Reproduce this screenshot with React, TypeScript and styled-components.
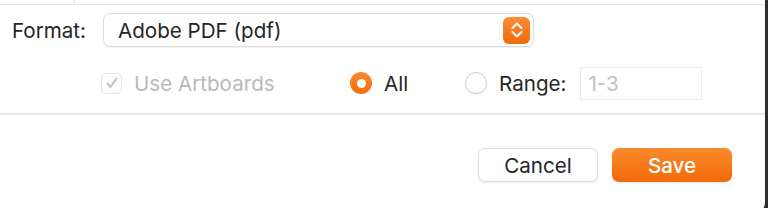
import React, { useState } from "react";
import styled, { createGlobalStyle } from "styled-components";

// styled-components
//--------------------------
const GlobalStyle = createGlobalStyle`
  html, body {
    margin: 0;
    padding: 0;
    background: #2d2d2d;
  }
  body {
    font-family: Inter, "Liberation Sans", Arial, sans-serif;
    -webkit-font-smoothing: antialiased;
  }
`;

const Frame = styled.div`
  width: 768px;
  height: 208px;
  overflow: hidden;
  background: #2d2d2d;
`;

const Panel = styled.div`
  width: 765px;
  height: 216px;
  background: #ffffff;
  border-bottom-right-radius: 14px;
  display: flex;
  flex-direction: column;
`;

const TopStrip = styled.div`
  height: 4px;
  border-bottom: 1px solid #e2e2e2;
  display: flex;
`;

const TopCell = styled.div`
  width: 74px;
  border-right: 1px solid #e2e2e2;
`;

const FormatRow = styled.div`
  display: flex;
  align-items: center;
  padding-left: 12px;
  margin-top: 8px;
  height: 34px;
`;

const Label = styled.span<{ $dim?: boolean }>`
  font-size: 20.6px;
  color: ${(p) => (p.$dim ? "#b9b9b9" : "#262626")};
  white-space: nowrap;
`;

const FormatLabel = styled(Label)`
  width: 91px;
  flex-shrink: 0;
`;

const SelectBox = styled.div`
  width: 431px;
  height: 34px;
  box-sizing: border-box;
  border: 1px solid #dcdcdc;
  border-radius: 7px;
  box-shadow: 0 1px 1px rgba(0, 0, 0, 0.06);
  display: flex;
  align-items: center;
  justify-content: space-between;
  padding: 0 3px 0 14px;
`;

const Stepper = styled.div`
  width: 27px;
  height: 27px;
  border-radius: 6px;
  background: linear-gradient(#fb8c32, #f26a0c);
  display: flex;
  align-items: center;
  justify-content: center;
`;

const OptionsRow = styled.div`
  display: flex;
  align-items: center;
  padding-left: 101px;
  margin-top: 19px;
  height: 34px;
`;

const Option = styled.label<{ $width?: number }>`
  display: flex;
  align-items: center;
  flex-shrink: 0;
  width: ${(p) => (p.$width ? `${p.$width}px` : "auto")};
  gap: 12px;
`;

const CheckBox = styled.span`
  width: 21px;
  height: 21px;
  flex-shrink: 0;
  box-sizing: border-box;
  border: 1px solid #e3e3e3;
  border-radius: 5px;
  display: flex;
  align-items: center;
  justify-content: center;
`;

const Radio = styled.span<{ $on: boolean }>`
  width: 22px;
  height: 22px;
  flex-shrink: 0;
  box-sizing: border-box;
  border-radius: 50%;
  display: flex;
  align-items: center;
  justify-content: center;
  background: ${(p) => (p.$on ? "linear-gradient(#fb8a2e, #f36c0c)" : "#fff")};
  border: ${(p) => (p.$on ? "none" : "1px solid #cfcfcf")};
  box-shadow: ${(p) => (p.$on ? "none" : "0 1px 1px rgba(0,0,0,0.05)")};

  &::after {
    content: "";
    display: ${(p) => (p.$on ? "block" : "none")};
    width: 9px;
    height: 9px;
    border-radius: 50%;
    background: #fff;
  }
`;

const RangeInput = styled.div`
  width: 122px;
  height: 33px;
  flex-shrink: 0;
  box-sizing: border-box;
  border: 1px solid #ececec;
  margin-left: 2px;
  display: flex;
  align-items: center;
  padding-left: 7px;
  font-size: 20.6px;
  color: #c2c2c2;
`;

const Separator = styled.div`
  height: 2px;
  background: #e7e7e7;
  margin-top: 13px;
`;

const ButtonRow = styled.div`
  display: flex;
  justify-content: flex-end;
  gap: 14px;
  padding-right: 33px;
  margin-top: 33px;
`;

const Button = styled.button<{ $primary?: boolean }>`
  width: 120px;
  height: 34px;
  border-radius: 7px;
  font-family: inherit;
  font-size: 20.6px;
  cursor: pointer;
  box-sizing: border-box;
  border: ${(p) => (p.$primary ? "none" : "1px solid #dedede")};
  color: ${(p) => (p.$primary ? "#ffffff" : "#262626")};
  font-weight: ${(p) => (p.$primary ? 500 : 400)};
  background: ${(p) =>
    p.$primary ? "linear-gradient(#f98a2c, #f26a09)" : "#ffffff"};
  box-shadow: 0 1px 2px rgba(0, 0, 0, 0.08);
`;

//--------------------------

const App = () => {
  const [range, setRange] = useState<"all" | "range">("all");

  return (
    <Frame>
      <GlobalStyle />
      <Panel>
        <TopStrip>
          <TopCell />
        </TopStrip>

        <FormatRow>
          <FormatLabel>Format:</FormatLabel>
          <SelectBox>
            <Label>Adobe PDF (pdf)</Label>
            <Stepper>
              <svg width="14" height="20" viewBox="0 0 14 20" fill="none">
                <path
                  d="M2.5 8 L7 3.5 L11.5 8 M2.5 12 L7 16.5 L11.5 12"
                  stroke="#fff"
                  strokeWidth="2"
                  strokeLinecap="round"
                  strokeLinejoin="round"
                />
              </svg>
            </Stepper>
          </SelectBox>
        </FormatRow>

        <OptionsRow>
          <Option $width={249}>
            <CheckBox>
              <svg width="14" height="14" viewBox="0 0 14 14" fill="none">
                <path
                  d="M2.5 7.5 L5.5 11 L11.5 2.5"
                  stroke="#c2c2c2"
                  strokeWidth="2"
                  strokeLinecap="round"
                  strokeLinejoin="round"
                />
              </svg>
            </CheckBox>
            <Label $dim>Use Artboards</Label>
          </Option>
          <Option $width={115} onClick={() => setRange("all")}>
            <Radio $on={range === "all"} />
            <Label>All</Label>
          </Option>
          <Option onClick={() => setRange("range")}>
            <Radio $on={range === "range"} />
            <Label>Range:</Label>
            <RangeInput>1-3</RangeInput>
          </Option>
        </OptionsRow>

        <Separator />

        <ButtonRow>
          <Button>Cancel</Button>
          <Button $primary>Save</Button>
        </ButtonRow>
      </Panel>
    </Frame>
  );
};

export default App;
